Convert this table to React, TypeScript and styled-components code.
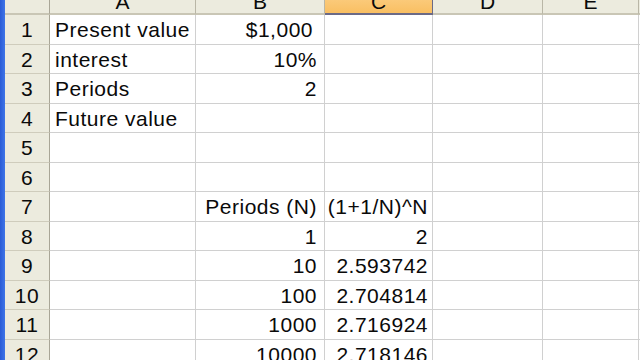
import styled, { createGlobalStyle } from 'styled-components'

const GlobalStyle = createGlobalStyle`
  html, body {
    margin: 0;
    padding: 0;
    width: 640px;
    height: 360px;
    overflow: hidden;
    background: #ffffff;
  }
`

const Screen = styled.div`
  display: flex;
  width: 640px;
  height: 360px;
  overflow: hidden;
  font-family: 'Liberation Sans', Arial, sans-serif;
  color: #0a0a0a;
`

const WindowEdge = styled.div`
  width: 5px;
  flex: none;
  background: linear-gradient(to right, #2a5bd6, #3f75e8);
`

const Sheet = styled.div`
  display: grid;
  grid-template-columns: 45px 146px 129px 108px 110px 96px 6px;
  grid-auto-rows: 29.5px;
  margin-top: -14.5px;
  flex: none;
`

const ColHeader = styled.div<{ $active?: boolean }>`
  box-sizing: border-box;
  display: flex;
  align-items: center;
  justify-content: center;
  padding-top: 5px;
  font-size: 21px;
  background: ${(p) => (p.$active ? 'linear-gradient(#fdd592, #f9bf62)' : '#ecebde')};
  border-right: 1px solid ${(p) => (p.$active ? '#6b6a86' : '#b9b6a6')};
  border-bottom: 2px solid ${(p) => (p.$active ? '#6b6a86' : '#c9c6b5')};
`

const Corner = styled.div`
  box-sizing: border-box;
  background: #ecebde;
  border-right: 1px solid #a9a697;
  border-bottom: 2px solid #c9c6b5;
`

const RowHeader = styled.div`
  box-sizing: border-box;
  display: flex;
  align-items: center;
  justify-content: center;
  padding-top: 2px;
  font-size: 21px;
  letter-spacing: 0.5px;
  background: #ecebde;
  border-right: 1px solid #a9a697;
  border-bottom: 1px solid #cfccbc;
`

const Cell = styled.div<{ $align?: 'left' | 'right'; $pad?: number }>`
  box-sizing: border-box;
  display: flex;
  align-items: center;
  justify-content: ${(p) => (p.$align === 'right' ? 'flex-end' : 'flex-start')};
  padding: 2px ${(p) => (p.$align === 'right' ? p.$pad ?? 7 : 4)}px 0
    ${(p) => (p.$align === 'right' ? 2 : 5)}px;
  font-size: 21px;
  letter-spacing: 0.5px;
  white-space: nowrap;
  border-right: 1px solid #d0d0d0;
  border-bottom: 1px solid #d0d0d0;
`

const columns = ['A', 'B', 'C', 'D', 'E']

type Row = {
  a?: string
  b?: string
  c?: string
}

const rows: Row[] = [
  { a: 'Present value', b: '$1,000' },
  { a: 'interest', b: '10%' },
  { a: 'Periods', b: '2' },
  { a: 'Future value' },
  {},
  {},
  { b: 'Periods (N)', c: '(1+1/N)^N' },
  { b: '1', c: '2' },
  { b: '10', c: '2.593742' },
  { b: '100', c: '2.704814' },
  { b: '1000', c: '2.716924' },
  { b: '10000', c: '2.718146' }
]

const App = () => {
  return (
    <>
      <GlobalStyle />
      <Screen>
        <WindowEdge />
        <Sheet>
          <Corner />
          {columns.map((col) => (
            <ColHeader key={col} $active={col === 'C'}>
              {col}
            </ColHeader>
          ))}
          <Corner />
          {rows.map((row, i) => (
            <RowCells key={i} index={i + 1} row={row} />
          ))}
        </Sheet>
      </Screen>
    </>
  )
}

const RowCells = ({ index, row }: { index: number; row: Row }) => (
  <>
    <RowHeader>{index}</RowHeader>
    <Cell>{row.a}</Cell>
    <Cell $align="right" $pad={row.b === '$1,000' ? 11 : 7}>
      {row.b}
    </Cell>
    <Cell $align="right" $pad={4}>
      {row.c}
    </Cell>
    <Cell />
    <Cell />
    <Cell />
  </>
)

export default App
